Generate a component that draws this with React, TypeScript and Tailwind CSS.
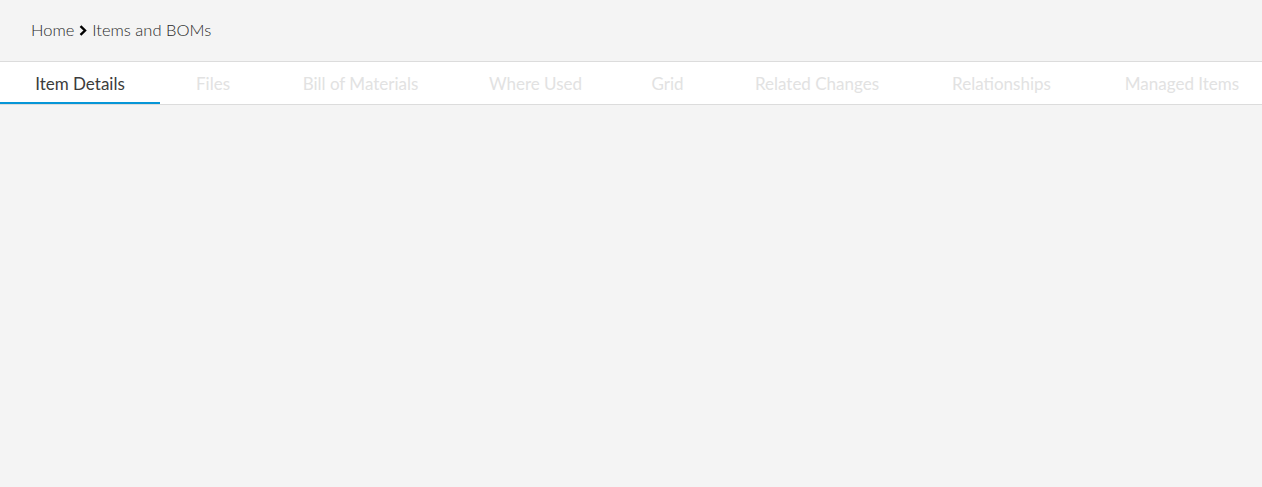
const tabs = [
	{ label: "Item Details", width: "w-[160px]" },
	{ label: "Files", width: "w-[106px]" },
	{ label: "Bill of Materials", width: "w-[189px]" },
	{ label: "Where Used", width: "w-[161px]" },
	{ label: "Grid", width: "w-[103px]" },
	{ label: "Related Changes", width: "w-[196px]" },
	{ label: "Relationships", width: "w-[173px]" },
	{ label: "Managed Items", width: "w-[188px]" },
];

export default function App() {
	return (
		<div className="min-h-screen overflow-hidden bg-[#f4f4f4] font-['Lato','Liberation_Sans',sans-serif] text-[#3c3c3c]">
			{/* Breadcrumb */}
			<div className="flex h-[61px] items-center gap-[5px] pb-px pl-[31px] text-[16.5px] font-light text-[#2a2a2a]">
				<span>Home</span>
				<svg width="8" height="11" viewBox="0 0 8 11" aria-hidden="true">
					<path d="M1.5 1.2 L6 5.5 L1.5 9.8" fill="none" stroke="#000" strokeWidth="2.4" />
				</svg>
				<span>Items and BOMs</span>
			</div>

			{/* Tabs */}
			<div className="flex h-[44px] border-y border-[#dcdcdc] bg-white">
				{tabs.map((tab, i) => (
					<div
						key={tab.label}
						className={`relative flex shrink-0 items-center justify-center pt-px text-[17px] ${tab.width} ${
							i === 0 ? "text-[#3c3c3c]" : "text-[#e2e2e2]"
						}`}
					>
						<span className="whitespace-nowrap">{tab.label}</span>
						{i === 0 && <div className="absolute right-0 bottom-0 left-0 h-[2px] bg-[#0696d7]" />}
					</div>
				))}
			</div>
		</div>
	);
}
